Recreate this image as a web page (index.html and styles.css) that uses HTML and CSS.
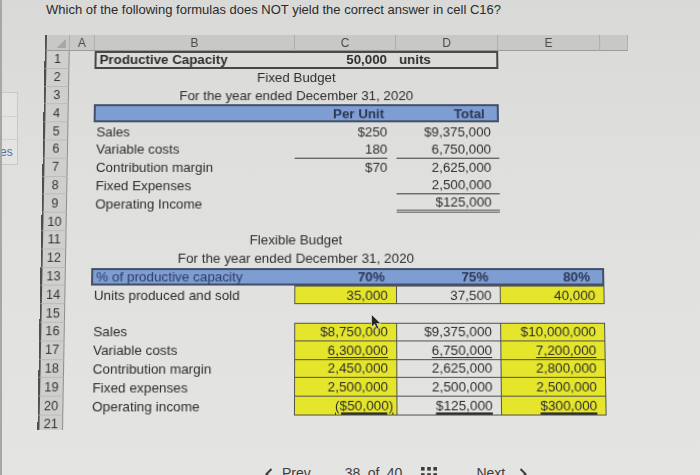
FILE: index.html
```html
<!DOCTYPE html>
<html lang="en">
<head>
<meta charset="utf-8">
<title>Flexible budget question</title>
<link rel="stylesheet" href="styles.css">
</head>
<body>
<div class="page">
  <aside class="side">
    <div class="side-box">
      <div class="side-row"></div>
      <div class="side-row"></div>
      <div class="side-row side-link">es</div>
    </div>
  </aside>

  <main class="main">
    <p class="question">Which of the following formulas does NOT yield the correct answer in cell C16?</p>

    <div class="sheet">
      <div class="hd corner"></div><div class="hd">A</div><div class="hd">B</div><div class="hd">C</div><div class="hd">D</div><div class="hd">E</div><div class="hd"></div>

      <div class="rn">1</div>
      <div class="c cB b box box-l">Productive Capacity</div>
      <div class="c cC b box r r9">50,000</div>
      <div class="c cD b box box-r">units</div>

      <div class="rn">2</div>
      <div class="c sBD">Fixed Budget</div>

      <div class="rn">3</div>
      <div class="c sBD">For the year ended December 31, 2020</div>

      <div class="rn">4</div>
      <div class="c cB blue blue-l"></div>
      <div class="c cC blue r hb">Per Unit</div>
      <div class="c cD blue blue-r r hb">Total</div>

      <div class="rn">5</div>
      <div class="c cB">Sales</div>
      <div class="c cC r r9">$250</div>
      <div class="c cD r">$9,375,000</div>

      <div class="rn">6</div>
      <div class="c cB">Variable costs</div>
      <div class="c cC r line-part">180</div>
      <div class="c cD r line">6,750,000</div>

      <div class="rn">7</div>
      <div class="c cB">Contribution margin</div>
      <div class="c cC r r9">$70</div>
      <div class="c cD r">2,625,000</div>

      <div class="rn">8</div>
      <div class="c cB">Fixed Expenses</div>
      <div class="c cD r line">2,500,000</div>

      <div class="rn">9</div>
      <div class="c cB">Operating Income</div>
      <div class="c cD r dline">$125,000</div>

      <div class="rn">10</div>

      <div class="rn">11</div>
      <div class="c sBD">Flexible Budget</div>

      <div class="rn">12</div>
      <div class="c sBD">For the year ended December 31, 2020</div>

      <div class="rn">13</div>
      <div class="c cB blue blue-l blue-txt">% of productive capacity</div>
      <div class="c cC blue r hb">70%</div>
      <div class="c cD blue r hb">75%</div>
      <div class="c cE blue blue-r r hb">80%</div>

      <div class="rn">14</div>
      <div class="c cB">Units produced and sold</div>
      <div class="c cC r cell yel bt bl">35,000</div>
      <div class="c cD r cell bt">37,500</div>
      <div class="c cE r cell yel bt">40,000</div>

      <div class="rn">15</div>

      <div class="rn">16</div>
      <div class="c cB">Sales</div>
      <div class="c cC r cell yel bt bl">$8,750,000</div>
      <div class="c cD r cell bt">$9,375,000</div>
      <div class="c cE r cell yel bt">$10,000,000</div>

      <div class="rn">17</div>
      <div class="c cB">Variable costs</div>
      <div class="c cC r cell yel bl"><span class="u">6,300,000</span></div>
      <div class="c cD r cell"><span class="u">6,750,000</span></div>
      <div class="c cE r cell yel"><span class="u">7,200,000</span></div>

      <div class="rn">18</div>
      <div class="c cB">Contribution margin</div>
      <div class="c cC r cell yel bl">2,450,000</div>
      <div class="c cD r cell">2,625,000</div>
      <div class="c cE r cell yel">2,800,000</div>

      <div class="rn">19</div>
      <div class="c cB">Fixed expenses</div>
      <div class="c cC r cell yel bl">2,500,000</div>
      <div class="c cD r cell">2,500,000</div>
      <div class="c cE r cell yel">2,500,000</div>

      <div class="rn">20</div>
      <div class="c cB">Operating income</div>
      <div class="c cC r cell yel bl neg"><span class="uu">($50,000)</span></div>
      <div class="c cD r cell"><span class="uu">$125,000</span></div>
      <div class="c cE r cell yel"><span class="uu">$300,000</span></div>

      <div class="rn">21</div>
    </div>

    <nav class="pager">
      <span class="pg-item pg-prev">
        <svg class="chev" width="8" height="12" viewBox="0 0 8 12"><polyline points="6.5,1 1.5,6 6.5,11" fill="none" stroke="#3d3d3d" stroke-width="2"/></svg>
        <span class="pg-word">Prev</span>
      </span>
      <span class="pg-item pg-count">38 of 40</span>
      <svg class="pg-grid" width="16" height="16" viewBox="0 0 16 16">
        <rect x="0" y="0" width="3.6" height="3.6"/><rect x="6.2" y="0" width="3.6" height="3.6"/><rect x="12.4" y="0" width="3.6" height="3.6"/>
        <rect x="0" y="6.2" width="3.6" height="3.6"/><rect x="6.2" y="6.2" width="3.6" height="3.6"/><rect x="12.4" y="6.2" width="3.6" height="3.6"/>
        <rect x="0" y="12.4" width="3.6" height="3.6"/><rect x="6.2" y="12.4" width="3.6" height="3.6"/><rect x="12.4" y="12.4" width="3.6" height="3.6"/>
      </svg>
      <span class="pg-item pg-next">
        <span class="pg-word">Next</span>
        <svg class="chev chev-r" width="8" height="12" viewBox="0 0 8 12"><polyline points="1.5,1 6.5,6 1.5,11" fill="none" stroke="#3d3d3d" stroke-width="2"/></svg>
      </span>
    </nav>
  </main>

  <svg class="cursor" width="11" height="16" viewBox="0 0 11 16"><path d="M0.5 0.5 L0.5 13 L3.6 10.2 L5.8 15 L7.8 14.1 L5.7 9.5 L9.8 9.5 Z" fill="#262626" stroke="#f2f2f2" stroke-width="0.6"/></svg>
</div>
</body>
</html>
```

FILE: styles.css
```css
* { box-sizing: border-box; }

html, body {
  margin: 0;
  padding: 0;
}

body {
  width: 700px;
  height: 475px;
  overflow: hidden;
  background: #dfdfdd;
  font-family: "Liberation Sans", Arial, sans-serif;
  color: #2e2e2e;
}

.page {
  position: relative;
  display: flex;
  height: 475px;
  overflow: hidden;
  border-left: 2px solid #a7a7a5;
  background: linear-gradient(180deg, #d9d9d7 0%, #dfdfdd 35%, #e4e4e2 100%);
}

/* left side panel, cut off */
.side {
  width: 16px;
  flex: none;
  padding-top: 92px;
}

.side-box {
  border: 1px solid #c8c8c6;
  border-left: none;
  background: #e3e3e1;
}

.side-row {
  height: 23.5px;
  border-bottom: 1px solid #d0d0ce;
  font-size: 12px;
  line-height: 24px;
  color: #5b6c9e;
  white-space: nowrap;
}

.side-row:last-child { border-bottom: none; }

.side-link { text-indent: -2px; }

/* main column */
.main {
  flex: 1;
  display: flex;
  flex-direction: column;
  padding-left: 27px;
}

.main > * { flex: none; }

.question {
  margin: 2px 0 0 1px;
  font-size: 13px;
  line-height: 16px;
  color: #2b2b2b;
}

/* spreadsheet */
.sheet {
  margin-top: 17px;
  width: 583px;
  height: 386px;
  overflow: hidden;
  display: grid;
  grid-template-columns: 25px 25px 200px 101px 102px 102px 28px;
  grid-template-rows: 16px;
  grid-auto-rows: 17.8px;
  transform-origin: 50% 0;
  transform: perspective(1000px) rotateX(3.8deg);
}

.hd {
  background: #c8c8c6;
  border-right: 1px solid #adadab;
  border-bottom: 1px solid #9a9a98;
  font-size: 12px;
  color: #4a4a4a;
  display: flex;
  align-items: center;
  justify-content: center;
}

.corner {
  position: relative;
  border-left: 2px solid #4f4f4f;
}

.corner::after {
  content: "";
  position: absolute;
  right: 3px;
  bottom: 2px;
  border-style: solid;
  border-width: 0 0 9px 9px;
  border-color: transparent transparent #a6a6a4 transparent;
}

.rn {
  grid-column: 1;
  background: #cfcfcd;
  border-left: 2px solid #4f4f4f;
  border-right: 1px solid #8e8e8c;
  border-bottom: 1px solid #bcbcba;
  font-size: 12.5px;
  color: #353535;
  display: flex;
  align-items: center;
  justify-content: center;
}

.c {
  display: flex;
  align-items: center;
  padding: 0 3px;
  white-space: nowrap;
  font-size: 13.3px;
  color: #2e2e2e;
}

.cB { grid-column: 3; }
.cC { grid-column: 4; }
.cD { grid-column: 5; }
.cE { grid-column: 6; }

.sBD {
  grid-column: 3 / 6;
  justify-content: center;
}

.r {
  justify-content: flex-end;
  padding-right: 8px;
}

.r9 { padding-right: 9px; }

.b { font-weight: bold; }

/* row 1 box */
.box {
  border-top: 2px solid #474747;
  border-bottom: 2px solid #474747;
}
.box-l { border-left: 2px solid #474747; }
.box-r { border-right: 2px solid #474747; }

/* blue header bars */
.blue {
  background: #7e9dd2;
  border-top: 2px solid #44506b;
  border-bottom: 2px solid #44506b;
}
.blue-l { border-left: 2px solid #44506b; }
.blue-r { border-right: 2px solid #44506b; }

.hb {
  font-weight: bold;
  color: #2c3855;
  padding-right: 12px;
}

.blue-txt { color: #2f3d62; }

/* accounting lines */
.line { border-bottom: 1px solid #3a3a3a; }

.line-part {
  border-bottom: 1px solid #3a3a3a;
  margin-right: 9px;
  padding-right: 0;
}

.dline { border-bottom: 3px double #5a5a5a; }

/* bordered value cells */
.cell {
  border-right: 1px solid #555553;
  border-bottom: 1px solid #555553;
}
.bt { border-top: 1px solid #555553; }
.bl { border-left: 1px solid #555553; }

.yel { background: #e5e52c; }

.neg { padding-right: 3px; }

.u {
  text-decoration: underline;
  text-decoration-thickness: 1px;
  text-underline-offset: 2px;
}

.uu {
  text-decoration: underline;
  text-decoration-thickness: 2px;
  text-underline-offset: 2px;
}

/* pager (cut off at bottom, as in the photo) */
.pager {
  margin-top: 44px;
  display: flex;
  align-items: flex-start;
  font-size: 14px;
  line-height: 16px;
  color: #3d3d3d;
  white-space: nowrap;
}

.pg-item {
  display: flex;
  align-items: flex-start;
}

.chev {
  display: block;
  margin-top: 3px;
}

.pg-prev { margin-left: 220px; }
.pg-prev .pg-word { margin-left: 9px; }

.pg-count {
  margin-left: 34px;
  word-spacing: 3.5px;
}

.pg-grid {
  display: block;
  margin-left: 19px;
  margin-top: 2px;
  fill: #3d3d3d;
}

.pg-next { margin-left: 39px; }
.chev-r { margin-left: 14px; }

/* mouse pointer over the sheet */
.cursor {
  position: absolute;
  left: 369px;
  top: 314px;
}
```
